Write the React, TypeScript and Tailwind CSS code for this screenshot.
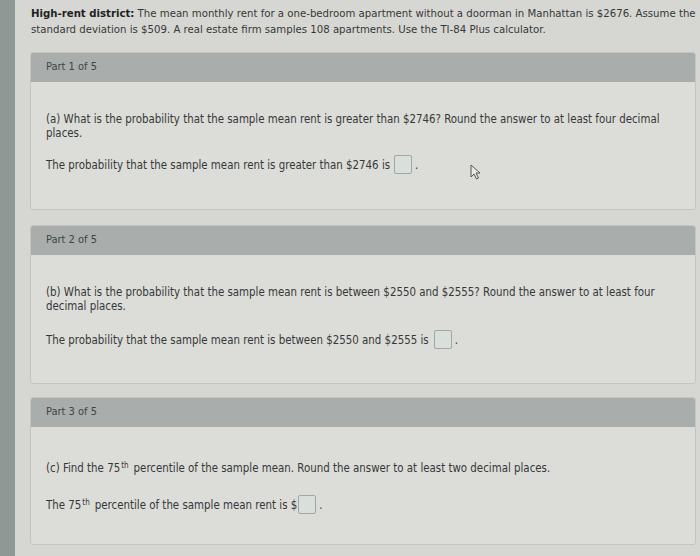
import React from "react";

const font = { fontFamily: '"DejaVu Sans Condensed", "DejaVu Sans", Verdana, sans-serif' };

function Box() {
  return (
    <span className="inline-block align-middle border border-[#9fa8a4] bg-[#d9dfdb] rounded-[2px] w-[18px] h-[19px]" />
  );
}

function Card({
  part,
  children,
  bodyH,
}: {
  part: string;
  children: React.ReactNode;
  bodyH: string;
}) {
  return (
    <div className="border border-[#c3c5c1] rounded-[3px] bg-[#dcddd9] overflow-hidden">
      <div className="h-[29px] bg-[#a9aeac] flex items-center pl-[15px] text-[11px] text-[#3f4543]">
        {part}
      </div>
      <div className={bodyH}>{children}</div>
    </div>
  );
}

export default function App() {
  return (
    <div
      className="w-[700px] h-[556px] flex bg-[#d6d7d3] overflow-hidden text-[#363838] [font-stretch:condensed]"
      style={font}
    >
      <div className="w-[15px] shrink-0 bg-[#8f9895]" />
      <div className="flex-1 pl-[15px] flex flex-col">
        <p className="pt-[6px] pl-[1px] text-[11.3px] leading-[16px]">
          <b className="font-bold text-[#222]">High-rent district:</b>{" "}
          <span>
            The mean monthly rent for a one-bedroom apartment without a doorman in Manhattan is $2676. Assume the
            standard deviation is $509. A real estate firm samples 108 apartments. Use the TI-84 Plus calculator.
          </span>
        </p>
        <div className="mt-[14px] mr-[4px]">
          <Card part="Part 1 of 5" bodyH="h-[127px] pt-[30px] pl-[15px] pr-[20px] text-[11.4px] leading-[14px]">
            <p>
              (a) What is the probability that the sample mean rent is greater than $2746? Round the answer to at
              least four decimal places.
            </p>
            <div className="mt-[15px] flex items-center relative">
              <span>The probability that the sample mean rent is greater than $2746 is</span>
              <span className="ml-[4px]">
                <Box />
              </span>
              <span className="ml-[3px]">.</span>
              <svg className="absolute left-[424px] top-[9px]" width="12" height="16" viewBox="0 0 12 16">
                <path d="M1 1 L1 13 L4 10 L6.5 15 L8.5 14 L6 9 L10 9 Z" fill="#e8e8e6" stroke="#555" strokeWidth="1" strokeLinejoin="round" />
              </svg>
            </div>
          </Card>
        </div>
        <div className="mt-[15px] mr-[4px]">
          <Card part="Part 2 of 5" bodyH="h-[128px] pt-[30px] pl-[15px] pr-[40px] text-[11.4px] leading-[14px]">
            <p>
              (b) What is the probability that the sample mean rent is between $2550 and $2555? Round the answer to
              at least four decimal places.
            </p>
            <div className="mt-[17px] flex items-center">
              <span>The probability that the sample mean rent is between $2550 and $2555 is</span>
              <span className="ml-[5px]">
                <Box />
              </span>
              <span className="ml-[3px]">.</span>
            </div>
          </Card>
        </div>
        <div className="mt-[13px] mr-[4px]">
          <Card part="Part 3 of 5" bodyH="h-[117px] pt-[34px] pl-[15px] pr-[30px] text-[11.4px] leading-[14px]">
            <p>
              (c) Find the 75<sup className="text-[8px] relative -top-[4px] ml-[1px] mr-[5px]">th</sup>percentile of
              the sample mean. Round the answer to at least two decimal places.
            </p>
            <div className="mt-[20px] flex items-center">
              <span>
                The 75<sup className="text-[8px] relative -top-[4px] ml-[1px] mr-[5px]">th</sup>percentile of the
                sample mean rent is $
              </span>
              <span className="ml-[1px]">
                <Box />
              </span>
              <span className="ml-[3px]">.</span>
            </div>
          </Card>
        </div>
      </div>
    </div>
  );
}
